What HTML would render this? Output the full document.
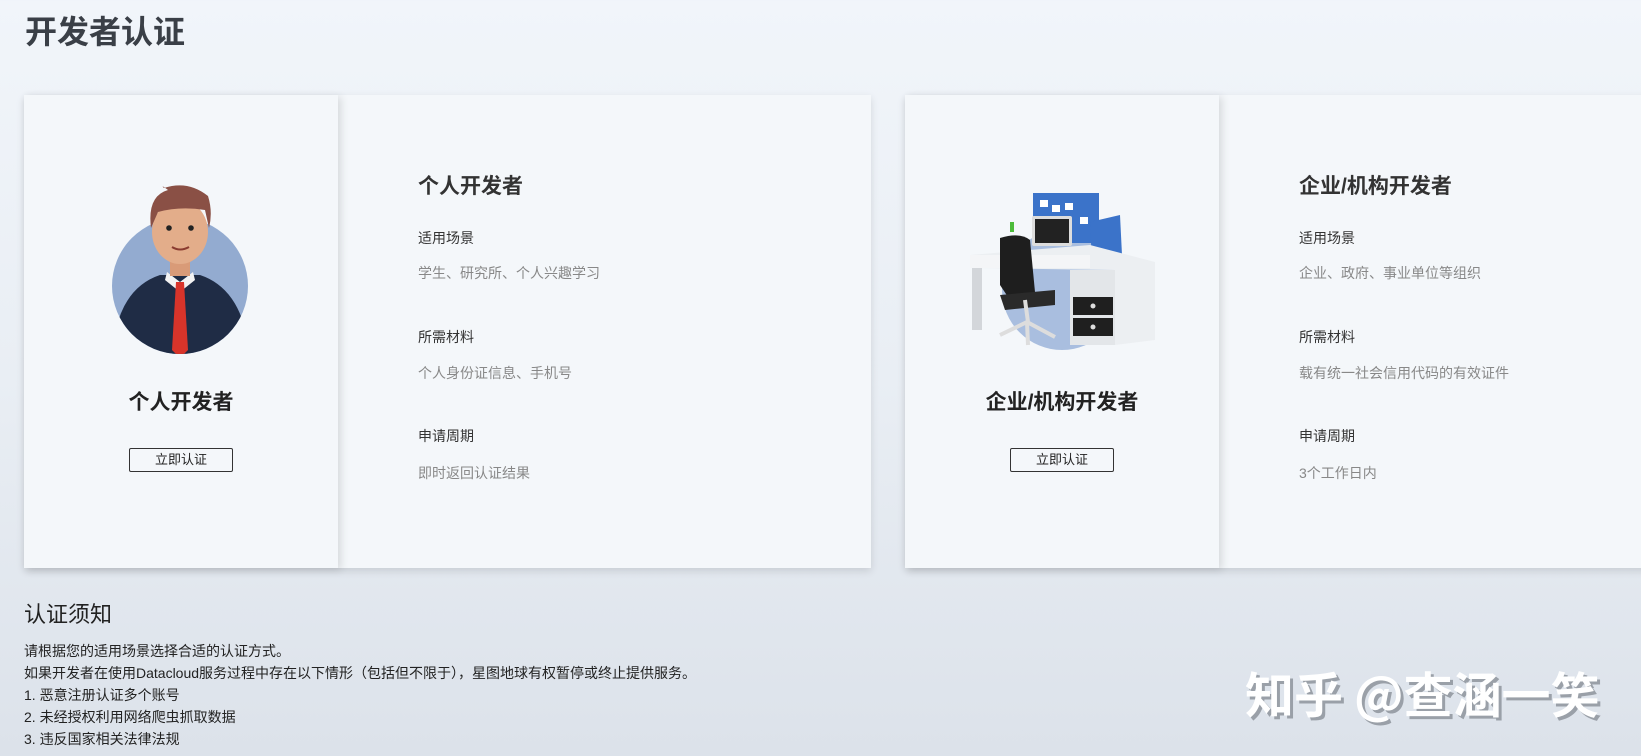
<!DOCTYPE html>
<html><head><meta charset="utf-8"><style>
*{margin:0;padding:0;box-sizing:border-box}
html,body{width:1641px;height:756px;overflow:hidden}
body{background:linear-gradient(180deg,#f1f5fa 0%,#e9eef4 50%,#dce2ea 100%);font-family:"Liberation Sans","Noto Sans CJK SC",sans-serif;position:relative;color:#333}
.abs{position:absolute}
h1{position:absolute;left:25px;top:7px;font-size:32px;font-weight:bold;color:#3a3f47;letter-spacing:0}
.card{position:absolute;top:95px;height:473px;background:#f4f7fa;box-shadow:0 3px 8px rgba(0,0,0,.12)}
.left{position:absolute;left:0;top:0;width:314px;height:473px;background:#f4f7fa;box-shadow:3px 2px 8px rgba(0,0,0,.12);z-index:1}
.lt{position:absolute;left:0;width:314px;text-align:center;top:291px;font-size:21px;font-weight:bold;color:#222}
.btn{position:absolute;left:105px;top:353px;width:104px;height:24px;border:1px solid #333;border-radius:2px;text-align:center;font-size:13px;line-height:22px;color:#222}
.rt{position:absolute;font-size:14px}
.rt .t{position:absolute;left:0;white-space:nowrap}
.notice{position:absolute;left:24px;top:597px;font-size:22px;color:#222}
.nl{position:absolute;left:24px;font-size:14px;color:#222;white-space:nowrap}
.wm{position:absolute;left:1245px;top:657px;font-size:49px;font-weight:bold;color:#fff;text-shadow:3px 3px 0 #9aa0a8;white-space:nowrap;font-family:"Noto Sans CJK SC",sans-serif}
</style></head><body>
<h1>开发者认证</h1>

<div class="card" style="left:24px;width:847px">
 <div class="left">
  <svg class="abs" style="left:76px;top:90px" width="160" height="170" viewBox="100 185 160 170">
   <defs><clipPath id="c"><circle cx="180" cy="286" r="68"/></clipPath></defs>
   <circle cx="180" cy="286" r="68" fill="#93abd0"/>
   <g clip-path="url(#c)">
    <path d="M112 360 Q115 290 160 275 L200 275 Q245 290 250 360Z" fill="#1f2c45"/>
    <path d="M167 272 L180 282 L193 272 L195 280 L180 292 L165 280Z" fill="#f3f3f3"/>
    <path d="M176 282 L184 282 L188 350 L180 358 L172 350Z" fill="#d8342a"/>
   </g>
   <rect x="170" y="252" width="20" height="24" fill="#d99b78"/>
   <ellipse cx="180" cy="232" rx="28" ry="32" fill="#e3ad8a"/>
   <path d="M151 228 Q147 196 168 190 Q160 184 164 188 Q188 180 208 196 Q213 212 209 228 L205 210 Q180 206 158 212Z" fill="#8a5045"/>
   <circle cx="169" cy="228" r="2.8" fill="#222"/><circle cx="191" cy="228" r="2.8" fill="#222"/>
   <path d="M172 247 Q180 252 189 247" stroke="#8a3b30" stroke-width="2" fill="none"/>
  </svg>
  <div class="lt">个人开发者</div>
  <div class="btn">立即认证</div>
 </div>
 <div class="rt" style="left:394px;top:2px">
  <div class="t" style="top:73px;font-size:21px;font-weight:bold;color:#333">个人开发者</div>
  <div class="t" style="top:131px;color:#333">适用场景</div>
  <div class="t" style="top:166px;color:#888">学生、研究所、个人兴趣学习</div>
  <div class="t" style="top:230px;color:#333">所需材料</div>
  <div class="t" style="top:266px;color:#888">个人身份证信息、手机号</div>
  <div class="t" style="top:329px;color:#333">申请周期</div>
  <div class="t" style="top:366px;color:#888">即时返回认证结果</div>
 </div>
</div>

<div class="card" style="left:905px;width:760px">
 <div class="left">
  <svg class="abs" style="left:50px;top:85px" width="220" height="180" viewBox="955 180 220 180">
   <circle cx="1062" cy="290" r="60" fill="#a9bedf"/>
   <rect x="1033" y="193" width="66" height="50" fill="#3b73c9"/>
   <rect x="1040" y="200" width="8" height="7" fill="#fff"/><rect x="1052" y="205" width="8" height="7" fill="#fff"/><rect x="1065" y="203" width="8" height="7" fill="#fff"/><rect x="1080" y="217" width="8" height="7" fill="#fff"/>
   <rect x="1032" y="216" width="40" height="30" rx="2" fill="#ddd"/><rect x="1035" y="219" width="34" height="24" fill="#222"/>
   <path d="M1090 222 L1120 215 L1122 255 L1092 263Z" fill="#3b73c9"/>
   <ellipse cx="1125" cy="263" rx="14" ry="6" fill="#e8902c"/>
   <path d="M970 255 L1090 245 L1155 262 L1155 340 L1115 345 L1115 270 L975 268Z" fill="#eceff2"/>
   <rect x="970" y="255" width="120" height="13" fill="#f4f5f7"/>
   <rect x="972" y="268" width="10" height="62" fill="#d3d6da"/>
   <rect x="1070" y="270" width="45" height="75" fill="#e3e6e9"/>
   <rect x="1073" y="297" width="40" height="18" fill="#1f1f1f"/><rect x="1073" y="318" width="40" height="18" fill="#1f1f1f"/>
   <circle cx="1093" cy="306" r="2.5" fill="#ddd"/><circle cx="1093" cy="327" r="2.5" fill="#ddd"/>
   <rect x="1010" y="222" width="4" height="10" fill="#4cbb3a"/>
   <path d="M1000 238 Q1020 232 1030 240 L1035 292 L1010 300 L1000 285Z" fill="#1e1e1e"/>
   <path d="M1000 295 L1055 290 L1055 305 L1005 310Z" fill="#2a2a2a"/>
   <path d="M1025 300 L1028 322 M1000 335 L1027 322 L1055 337 M1027 322 L1028 345" stroke="#ddd" stroke-width="4" fill="none"/>
  </svg>
  <div class="lt">企业/机构开发者</div>
  <div class="btn">立即认证</div>
 </div>
 <div class="rt" style="left:394px;top:2px">
  <div class="t" style="top:73px;font-size:21px;font-weight:bold;color:#333">企业/机构开发者</div>
  <div class="t" style="top:131px;color:#333">适用场景</div>
  <div class="t" style="top:166px;color:#888">企业、政府、事业单位等组织</div>
  <div class="t" style="top:230px;color:#333">所需材料</div>
  <div class="t" style="top:266px;color:#888">载有统一社会信用代码的有效证件</div>
  <div class="t" style="top:329px;color:#333">申请周期</div>
  <div class="t" style="top:366px;color:#888">3个工作日内</div>
 </div>
</div>

<div class="notice">认证须知</div>
<div class="nl" style="top:641px">请根据您的适用场景选择合适的认证方式。</div>
<div class="nl" style="top:663px">如果开发者在使用Datacloud服务过程中存在以下情形（包括但不限于），星图地球有权暂停或终止提供服务。</div>
<div class="nl" style="top:685px">1. 恶意注册认证多个账号</div>
<div class="nl" style="top:707px">2. 未经授权利用网络爬虫抓取数据</div>
<div class="nl" style="top:729px">3. 违反国家相关法律法规</div>
<div class="wm">知乎 @查涵一笑</div>
</body></html>
